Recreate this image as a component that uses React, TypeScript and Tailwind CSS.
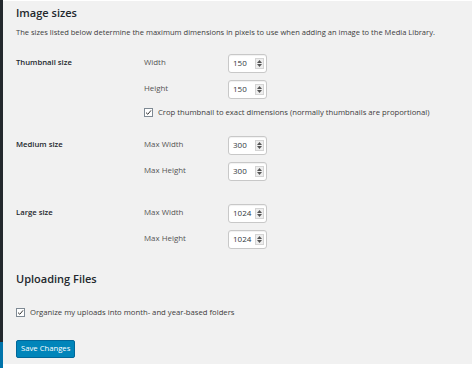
import React from "react";

function Spin({ value }: { value: string }) {
  return (
    <div className="flex h-[19px] w-[39px] items-center justify-between rounded-[3px] border border-[#c8c8c8] bg-white pl-[4px] pr-[2px] text-[8px] text-[#32373c] shadow-[inset_0_1px_1px_rgba(0,0,0,0.06)]">
      <span>{value}</span>
      <span className="flex h-[11px] w-[9px] flex-col items-center justify-center gap-[1px] border border-[#d4d4d4] bg-[#eee]">
        <svg width="5" height="3" viewBox="0 0 5 3"><path d="M0 3L2.5 0L5 3Z" fill="#555" /></svg>
        <svg width="5" height="3" viewBox="0 0 5 3"><path d="M0 0L2.5 3L5 0Z" fill="#555" /></svg>
      </span>
    </div>
  );
}

function Check({ label }: { label: string }) {
  return (
    <div className="flex items-center gap-[5px] text-[7.7px] text-[#3c3c3c]">
      <span className="flex h-[9px] w-[9px] items-center justify-center border border-[#7e8993] bg-white">
        <svg width="7" height="7" viewBox="0 0 7 7"><path d="M1 3.6L2.8 5.3L6 1.4" stroke="#333" strokeWidth="1" fill="none" /></svg>
      </span>
      <span>{label}</span>
    </div>
  );
}

function Field({ label, value }: { label: string; value: string }) {
  return (
    <div className="flex h-[26px] items-center">
      <span className="w-[84px] text-[7.9px] text-[#555]">{label}</span>
      <Spin value={value} />
    </div>
  );
}

function Group({ title, children }: { title: string; children: React.ReactNode }) {
  return (
    <div className="flex">
      <div className="flex h-[26px] w-[128px] items-center text-[7.7px] font-semibold text-[#23282d]">{title}</div>
      <div className="flex flex-col">{children}</div>
    </div>
  );
}

export default function App() {
  return (
    <div className="flex h-[368px] w-[474px] overflow-hidden bg-white" style={{ fontFamily: '"Open Sans", "Noto Sans", sans-serif' }}>
      <div className="flex w-[3px] flex-col justify-end bg-[#23282d]">
        <div className="h-[26px] bg-[#0073aa]" />
      </div>
      <div className="mb-[4px] mr-[2px] mt-[1px] flex-1 bg-[#f1f1f1] pl-[13px]">
        <h2 className="mt-[5px] text-[11px] font-semibold leading-[14px] text-[#23282d]">Image sizes</h2>
        <p className="mt-[7px] whitespace-nowrap text-[7.55px] leading-[11px] text-[#3c3c3c]">
          The sizes listed below determine the maximum dimensions in pixels to use when adding an image to the Media Library.
        </p>
        <div className="mt-[12px]">
          <Group title="Thumbnail size">
            <Field label="Width" value="150" />
            <Field label="Height" value="150" />
            <div className="flex h-[22px] items-center">
              <Check label="Crop thumbnail to exact dimensions (normally thumbnails are proportional)" />
            </div>
          </Group>
        </div>
        <div className="mt-[8px]">
          <Group title="Medium size">
            <Field label="Max Width" value="300" />
            <Field label="Max Height" value="300" />
          </Group>
        </div>
        <div className="mt-[16px]">
          <Group title="Large size">
            <Field label="Max Width" value="1024" />
            <Field label="Max Height" value="1024" />
          </Group>
        </div>
        <h2 className="mt-[20px] text-[11px] font-semibold leading-[14px] text-[#23282d]">Uploading Files</h2>
        <div className="mt-[21px]">
          <Check label="Organize my uploads into month- and year-based folders" />
        </div>
        <button className="mt-[21px] h-[18px] rounded-[2px] border border-[#006799] bg-[#0085ba] px-[4px] text-[7.7px] text-white">
          Save Changes
        </button>
      </div>
    </div>
  );
}
